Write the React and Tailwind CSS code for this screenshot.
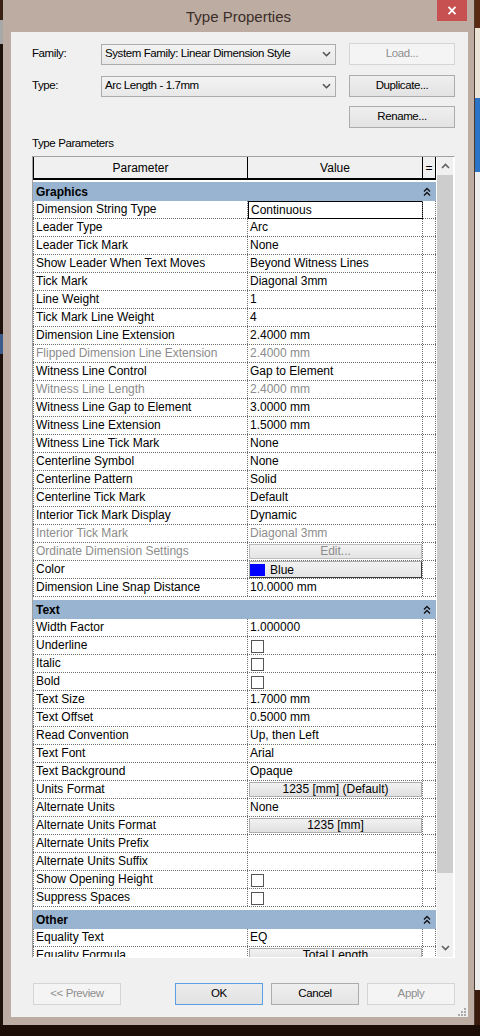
import React from "react";

const graphics = [
  { l: "Dimension String Type", v: "Continuous", t: "focus" },
  { l: "Leader Type", v: "Arc" },
  { l: "Leader Tick Mark", v: "None" },
  { l: "Show Leader When Text Moves", v: "Beyond Witness Lines" },
  { l: "Tick Mark", v: "Diagonal 3mm" },
  { l: "Line Weight", v: "1" },
  { l: "Tick Mark Line Weight", v: "4" },
  { l: "Dimension Line Extension", v: "2.4000 mm" },
  { l: "Flipped Dimension Line Extension", v: "2.4000 mm", dim: true },
  { l: "Witness Line Control", v: "Gap to Element" },
  { l: "Witness Line Length", v: "2.4000 mm", dim: true },
  { l: "Witness Line Gap to Element", v: "3.0000 mm" },
  { l: "Witness Line Extension", v: "1.5000 mm" },
  { l: "Witness Line Tick Mark", v: "None" },
  { l: "Centerline Symbol", v: "None" },
  { l: "Centerline Pattern", v: "Solid" },
  { l: "Centerline Tick Mark", v: "Default" },
  { l: "Interior Tick Mark Display", v: "Dynamic" },
  { l: "Interior Tick Mark", v: "Diagonal 3mm", dim: true },
  { l: "Ordinate Dimension Settings", v: "Edit...", t: "btn", dim: true },
  { l: "Color", v: "Blue", t: "color" },
  { l: "Dimension Line Snap Distance", v: "10.0000 mm" },
];

const text = [
  { l: "Width Factor", v: "1.000000" },
  { l: "Underline", t: "check" },
  { l: "Italic", t: "check" },
  { l: "Bold", t: "check" },
  { l: "Text Size", v: "1.7000 mm" },
  { l: "Text Offset", v: "0.5000 mm" },
  { l: "Read Convention", v: "Up, then Left" },
  { l: "Text Font", v: "Arial" },
  { l: "Text Background", v: "Opaque" },
  { l: "Units Format", v: "1235 [mm] (Default)", t: "btn" },
  { l: "Alternate Units", v: "None" },
  { l: "Alternate Units Format", v: "1235 [mm]", t: "btn" },
  { l: "Alternate Units Prefix", v: "" },
  { l: "Alternate Units Suffix", v: "" },
  { l: "Show Opening Height", t: "check" },
  { l: "Suppress Spaces", t: "check" },
];

const other = [
  { l: "Equality Text", v: "EQ" },
  { l: "Equality Formula", v: "Total Length", t: "btn" },
];

function DoubleUp() {
  return (
    <svg width="8" height="10" viewBox="0 0 8 10">
      <path d="M1 4.5L4 1.5L7 4.5M1 8.5L4 5.5L7 8.5" stroke="#111" strokeWidth="1.4" fill="none" />
    </svg>
  );
}

function Value({ r }) {
  if (r.t === "focus") {
    return (
      <div className="h-[18px] w-[175px] border border-black bg-white pl-[2px] leading-[16px]">{r.v}</div>
    );
  }
  if (r.t === "btn") {
    return (
      <div
        className={
          r.dim
            ? "mt-[1px] ml-[1px] h-[15px] w-[173px] border border-[#bdbdbd] bg-linear-to-b from-[#f2f2f2] to-[#e4e4e4] text-center leading-[13px] text-[#8c8c8c]"
            : "mt-[1px] ml-[1px] h-[15px] w-[173px] border border-[#adadad] bg-linear-to-b from-[#f2f2f2] to-[#e0e0e0] text-center leading-[13px] text-black"
        }
      >
        {r.v}
      </div>
    );
  }
  if (r.t === "color") {
    return (
      <div className="ml-[1px] flex h-[17px] w-[173px] items-center border border-[#adadad] border-r-[#3c3c3c] border-b-[#3c3c3c] bg-linear-to-b from-[#f2f2f2] to-[#e4e4e4]">
        <div className="h-[12px] w-[15px] bg-[#0000ff]" />
        <span className="ml-[5px]">Blue</span>
      </div>
    );
  }
  if (r.t === "check") {
    return <div className="mt-[3px] ml-[3px] h-[13px] w-[13px] border border-[#555555] bg-white" />;
  }
  return <div className={r.dim ? "pl-[2px] leading-[17px] text-[#8c8c8c]" : "pl-[2px] leading-[17px]"}>{r.v}</div>;
}

function Row({ r }) {
  return (
    <div className="flex h-[18px] shrink-0 border-b border-dotted border-[#6e6e6e]">
      <div
        className={
          r.dim
            ? "w-[214px] border-l border-dotted border-[#6e6e6e] pl-[2px] leading-[17px] text-[#8c8c8c] whitespace-nowrap"
            : "w-[214px] border-l border-dotted border-[#6e6e6e] pl-[2px] leading-[17px] text-black whitespace-nowrap"
        }
      >
        {r.l}
      </div>
      <div className="w-[175px] border-l border-dotted border-[#6e6e6e] whitespace-nowrap">
        <Value r={r} />
      </div>
      <div className="w-[14px] border-l border-r border-dotted border-[#6e6e6e]" />
    </div>
  );
}

function Section({ name, gap, rows }) {
  return (
    <>
      <div className={gap} />
      <div className="flex h-[19px] shrink-0 items-center justify-between bg-[#99b4d1] pl-[3px] pr-[5px] font-bold">
        <span>{name}</span>
        <DoubleUp />
      </div>
      {rows.map((r) => (
        <Row key={r.l} r={r} />
      ))}
    </>
  );
}

function Btn({ children, kind, w }) {
  const base = "flex h-[22px] items-center justify-center";
  if (kind === "disabled")
    return <div className={`${base} ${w} border border-[#d5d5d5] bg-[#f4f4f4] text-[#8f8f8f]`}>{children}</div>;
  if (kind === "default")
    return (
      <div className={`${base} ${w} border border-[#5b9ee6] bg-linear-to-b from-[#ececec] to-[#e2e2e2] text-black`}>
        {children}
      </div>
    );
  return (
    <div className={`${base} ${w} border border-[#acacac] bg-linear-to-b from-[#efefef] to-[#e3e3e3] text-black`}>
      {children}
    </div>
  );
}

function Combo({ children }) {
  return (
    <div className="flex h-[21px] w-[235px] items-center justify-between border border-[#acacac] bg-linear-to-b from-[#f3f3f3] to-[#e8e8e8] pl-[3px] pr-[4px]">
      <span>{children}</span>
      <svg width="9" height="6" viewBox="0 0 9 6">
        <path d="M1 1.2L4.5 4.7L8 1.2" stroke="#505050" strokeWidth="1.6" fill="none" />
      </svg>
    </div>
  );
}

function Arrow({ up }) {
  return (
    <svg width="9" height="6" viewBox="0 0 9 6">
      <path d={up ? "M1 5L4.5 1.5L8 5" : "M1 1L4.5 4.5L8 1"} stroke="#606060" strokeWidth="1.6" fill="none" />
    </svg>
  );
}

export default function App() {
  return (
    <div className="h-[1036px] w-[480px] overflow-hidden bg-[#1d0d07] font-['Liberation_Sans',Arial,sans-serif]">
      <div className="flex h-[1025px]">
        <div className="flex w-[3px] flex-col">
          <div className="h-[20px] bg-[#3a1f14]" />
          <div className="h-[24px] bg-[#a8a8a8]" />
          <div className="h-[290px] bg-[#1f120c]" />
          <div className="h-[20px] bg-[#3c5a8c]" />
          <div className="flex-1 bg-[#1f120c]" />
        </div>

        <div className="flex w-[471px] flex-col bg-[#bdaca1]">
          <div className="grid h-[32px] shrink-0 grid-cols-[1fr_auto_1fr]">
            <div />
            <div className="pt-[7px] text-[15px] leading-[20px] text-[#3b2d29]">Type Properties</div>
            <div className="flex justify-end pr-[7px]">
              <div className="flex h-[21px] w-[30px] items-center justify-center bg-[#c75050]">
                <svg width="10" height="9" viewBox="0 0 10 9">
                  <path d="M1.5 0.8L8.5 8.2M8.5 0.8L1.5 8.2" stroke="white" strokeWidth="1.8" />
                </svg>
              </div>
            </div>
          </div>

          <div className="ml-[8px] mr-[6px] flex h-[985px] shrink-0 flex-col bg-[#f0f0f0] pl-[21px] pr-[13px] pt-[11px] text-[11.5px] tracking-[-0.4px] text-black">
            <div className="flex h-[22px] items-center">
              <div className="w-[69px]">Family:</div>
              <Combo>System Family: Linear Dimension Style</Combo>
              <div className="ml-[13px]">
                <Btn kind="disabled" w="w-[106px]">Load...</Btn>
              </div>
            </div>
            <div className="mt-[10px] flex h-[22px] items-center">
              <div className="w-[69px]">Type:</div>
              <Combo>Arc Length - 1.7mm</Combo>
              <div className="ml-[13px]">
                <Btn w="w-[106px]">Duplicate...</Btn>
              </div>
            </div>
            <div className="mt-[9px] flex h-[22px] justify-end">
              <Btn w="w-[106px]">Rename...</Btn>
            </div>
            <div className="mt-[8px] h-[14px] leading-[14px]">Type Parameters</div>

            <div className="mt-[6px] flex h-[802px] w-[423px] shrink-0 border border-t-[#a0a0a0] border-l-[#a0a0a0] border-r-white border-b-white bg-white text-[12px] tracking-normal">
              <div className="flex h-[800px] w-[403px] flex-col overflow-hidden">
                <div className="flex h-[23px] shrink-0 border-b-2 border-black bg-[#f0f0f0]">
                  <div className="flex w-[214px] items-center justify-center border-l border-black">Parameter</div>
                  <div className="flex w-[175px] items-center justify-center border-l border-black">Value</div>
                  <div className="flex w-[14px] items-center justify-center border-l border-r border-black">=</div>
                </div>
                <Section name="Graphics" gap="h-[2px] shrink-0" rows={graphics} />
                <Section name="Text" gap="h-[3px] shrink-0" rows={text} />
                <Section name="Other" gap="h-[3px] shrink-0" rows={other} />
              </div>
              <div className="h-[800px] w-[18px] bg-white px-[1px]">
                <div className="flex h-full flex-col bg-[#f0f0f0]">
                  <div className="flex h-[18px] items-center justify-center">
                    <Arrow up />
                  </div>
                  <div className="h-[698px] bg-[#cdcdcd]" />
                  <div className="flex-1" />
                  <div className="flex h-[18px] items-center justify-center">
                    <Arrow />
                  </div>
                </div>
              </div>
            </div>

            <div className="mt-[25px] flex h-[22px] pl-[1px]">
              <Btn kind="disabled" w="w-[88px]">&lt;&lt; Preview</Btn>
              <div className="ml-[54px]">
                <Btn kind="default" w="w-[88px]">OK</Btn>
              </div>
              <div className="ml-[8px]">
                <Btn w="w-[88px]">Cancel</Btn>
              </div>
              <div className="ml-[8px]">
                <Btn kind="disabled" w="w-[88px]">Apply</Btn>
              </div>
            </div>
            <div className="-mr-[12px] flex flex-1 items-end justify-end">
              <svg width="9" height="9" viewBox="0 0 9 9">
                <g fill="#a9a9a9">
                  <rect x="6" y="0" width="2" height="2" />
                  <rect x="3" y="3" width="2" height="2" />
                  <rect x="6" y="3" width="2" height="2" />
                  <rect x="0" y="6" width="2" height="2" />
                  <rect x="3" y="6" width="2" height="2" />
                  <rect x="6" y="6" width="2" height="2" />
                </g>
              </svg>
            </div>
          </div>
          <div className="flex-1" />
        </div>

        <div className="flex w-[6px] flex-col border-l border-[#4a3a30]">
          <div className="h-[28px] bg-[#5b2a12]" />
          <div className="h-[70px] bg-[#ece4d6]" />
          <div className="h-[74px] bg-[#2b73c6]" />
          <div className="h-[818px] bg-[#eeeeee]" />
          <div className="flex-1 bg-[#3a1a0c]" />
        </div>
      </div>
    </div>
  );
}
